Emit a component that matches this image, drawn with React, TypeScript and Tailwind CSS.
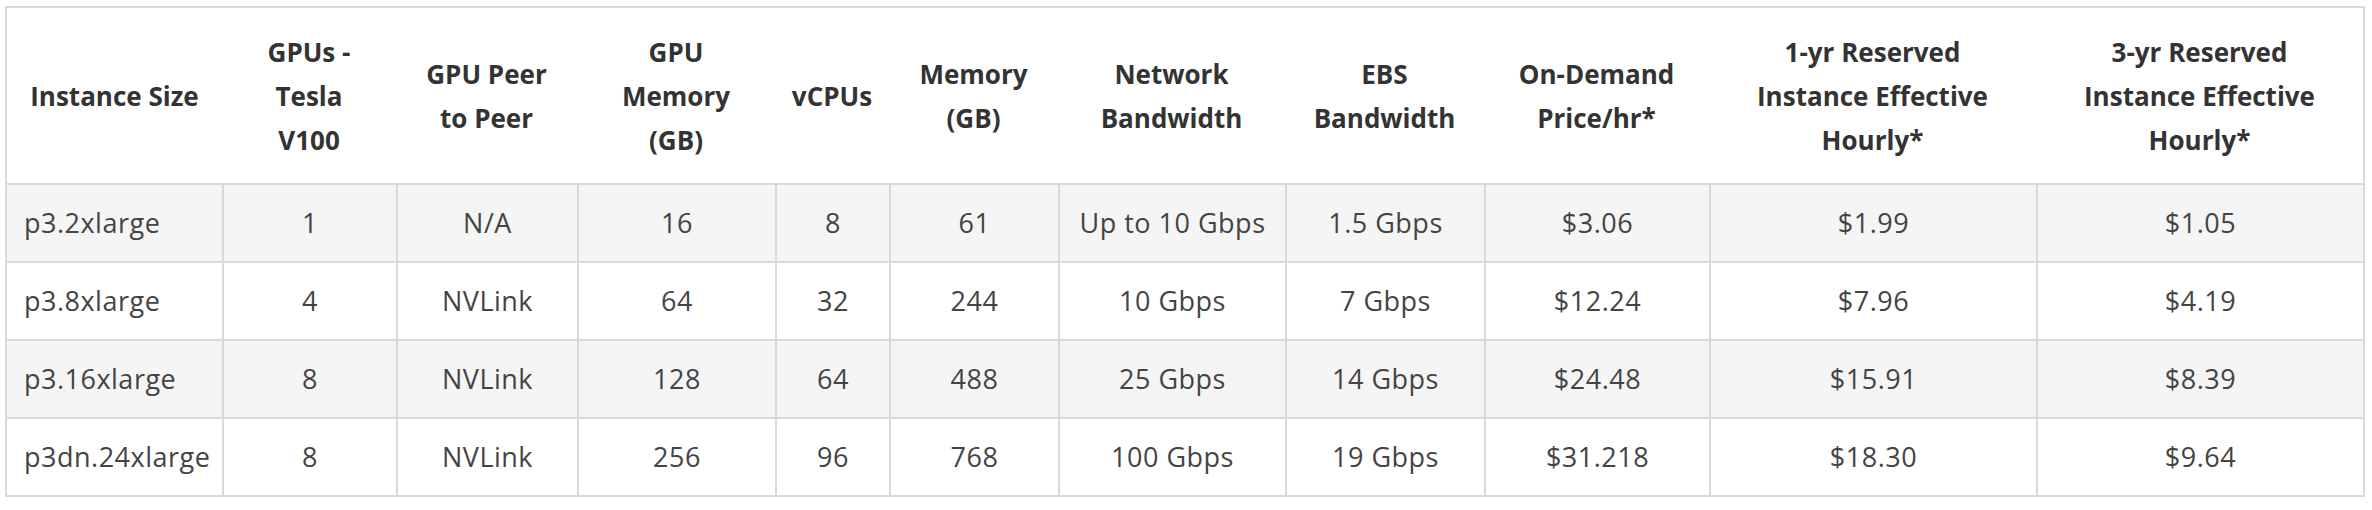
const cols =
  "grid grid-cols-[215px_174px_181px_198px_114px_169px_227px_199px_225px_327px_327px]";

const headers: string[][] = [
  ["Instance Size"],
  ["GPUs -", "Tesla", "V100"],
  ["GPU Peer", "to Peer"],
  ["GPU", "Memory", "(GB)"],
  ["vCPUs"],
  ["Memory", "(GB)"],
  ["Network", "Bandwidth"],
  ["EBS", "Bandwidth"],
  ["On-Demand", "Price/hr*"],
  ["1-yr Reserved", "Instance Effective", "Hourly*"],
  ["3-yr Reserved", "Instance Effective", "Hourly*"],
];

const rows: string[][] = [
  ["p3.2xlarge", "1", "N/A", "16", "8", "61", "Up to 10 Gbps", "1.5 Gbps", "$3.06", "$1.99", "$1.05"],
  ["p3.8xlarge", "4", "NVLink", "64", "32", "244", "10 Gbps", "7 Gbps", "$12.24", "$7.96", "$4.19"],
  ["p3.16xlarge", "8", "NVLink", "128", "64", "488", "25 Gbps", "14 Gbps", "$24.48", "$15.91", "$8.39"],
  ["p3dn.24xlarge", "8", "NVLink", "256", "96", "768", "100 Gbps", "19 Gbps", "$31.218", "$18.30", "$9.64"],
];

export default function App() {
  return (
    <div className="min-h-screen bg-white pl-[5px] pt-[6px] font-['Open_Sans',sans-serif] text-[26px] leading-[44px]">
      <div className="w-[2360px] border-2 border-[#d5dbdb]">
        {/* header row, no column dividers */}
        <div className={`${cols} border-b-2 border-[#d5dbdb] bg-white`}>
          {headers.map((lines, i) => (
            <div
              key={i}
              className="flex flex-col items-center justify-center pt-[22px] pb-[21px] text-center font-bold text-[#333333]"
            >
              {lines.map((l, j) => (
                <span key={j}>{l}</span>
              ))}
            </div>
          ))}
        </div>

        {rows.map((row, r) => (
          <div
            key={r}
            className={`${cols} ${r % 2 === 0 ? "bg-[#f5f5f5]" : "bg-white"} ${
              r < rows.length - 1 ? "border-b-2 border-[#d5dbdb]" : ""
            } text-[27px] tracking-[0.5px] text-[#444444]`}
          >
            {row.map((cell, c) => (
              <div
                key={c}
                className={
                  c === 0
                    ? "py-4 pl-[17px] text-left"
                    : "border-l-2 border-[#d5dbdb] py-4 text-center"
                }
              >
                {cell}
              </div>
            ))}
          </div>
        ))}
      </div>
    </div>
  );
}
